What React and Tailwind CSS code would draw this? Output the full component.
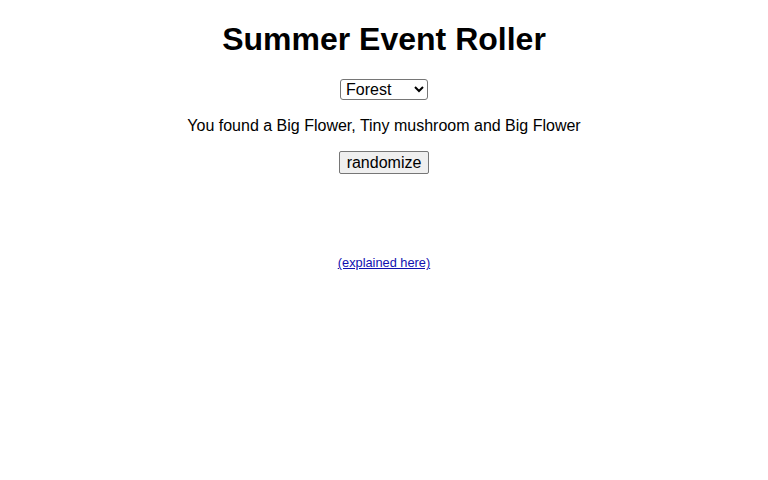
import { useState } from "react";

const places = {
  Forest: ["Big Flower", "Tiny mushroom", "Big Flower"],
  Beach: ["Sea Shell", "Starfish", "Crab"],
  Mountain: ["Shiny Rock", "Eagle Feather", "Pine Cone"],
};

const listItems = (items) =>
  items.slice(0, -1).join(", ") + " and " + items[items.length - 1];

const App = () => {
  const [place, setPlace] = useState("Forest");
  const [found, setFound] = useState(places.Forest);

  const randomize = () => {
    const pool = places[place];
    setFound(pool.map(() => pool[Math.floor(Math.random() * pool.length)]));
  };

  return (
    <div className="min-h-[480px] bg-white text-center font-['Liberation_Sans',Arial,sans-serif] text-[16px] text-black">
      <h1 className="pt-[21px] pb-[21px] text-[32px] leading-[37px] font-bold">
        Summer Event Roller
      </h1>
      <select
        className="mx-auto block h-[21px] w-[88px] rounded-[3px] border border-[#767676] bg-white pl-[1px] text-[16px] leading-[18px]"
        value={place}
        onChange={(e) => setPlace(e.target.value)}
      >
        {Object.keys(places).map((p) => (
          <option key={p}>{p}</option>
        ))}
      </select>
      <p className="mt-[17px] leading-[18px]">You found a {listItems(found)}</p>
      <button
        className="mx-auto mt-[16px] block h-[23px] rounded-[2px] border border-[#767676] bg-[#efefef] px-[7px] text-[16px] leading-[18px]"
        onClick={randomize}
      >
        randomize
      </button>
      <div className="mt-[81px] text-[12.8px] leading-[15px]">
        <a href="#" className="text-[#1010b0] underline">
          (explained here)
        </a>
      </div>
    </div>
  );
};

export default App;
